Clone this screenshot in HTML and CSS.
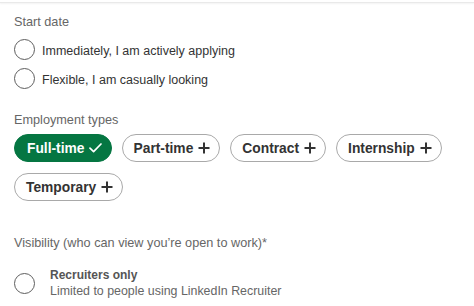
FILE: index.html
```html
<!DOCTYPE html>
<html lang="en">
<head>
    <meta charset="UTF-8">
    <meta name="viewport" content="width=device-width, initial-scale=1.0">
    <title>Open to work preferences</title>
    <link rel="stylesheet" href="styles.css">
</head>
<body>
    <!-- Header edge -->
    <div class="topbar"></div>

    <main class="form">
        <!-- Start date -->
        <section class="field field-start">
            <div class="field-label">Start date</div>
            <label class="radio">
                <span class="radio-circle"></span>
                <span class="radio-text">Immediately, I am actively applying</span>
            </label>
            <label class="radio">
                <span class="radio-circle"></span>
                <span class="radio-text">Flexible, I am casually looking</span>
            </label>
        </section>

        <!-- Employment types -->
        <section class="field field-types">
            <div class="field-label">Employment types</div>
            <div class="chips">
                <button class="chip chip-selected">Full-time
                    <svg class="chip-icon" width="13" height="10" viewBox="0 0 13 10"><path d="M1 5.2 L4.6 8.6 L12 1" fill="none" stroke="#fff" stroke-width="1.7" stroke-linecap="round" stroke-linejoin="round"/></svg>
                </button>
                <button class="chip">Part-time
                    <svg class="chip-icon" width="12" height="12" viewBox="0 0 12 12"><path d="M6 0.5 V11.5 M0.5 6 H11.5" stroke="#333" stroke-width="2"/></svg>
                </button>
                <button class="chip">Contract
                    <svg class="chip-icon" width="12" height="12" viewBox="0 0 12 12"><path d="M6 0.5 V11.5 M0.5 6 H11.5" stroke="#333" stroke-width="2"/></svg>
                </button>
                <button class="chip">Internship
                    <svg class="chip-icon" width="12" height="12" viewBox="0 0 12 12"><path d="M6 0.5 V11.5 M0.5 6 H11.5" stroke="#333" stroke-width="2"/></svg>
                </button>
                <button class="chip">Temporary
                    <svg class="chip-icon" width="12" height="12" viewBox="0 0 12 12"><path d="M6 0.5 V11.5 M0.5 6 H11.5" stroke="#333" stroke-width="2"/></svg>
                </button>
            </div>
        </section>

        <!-- Visibility -->
        <section class="field field-visibility">
            <div class="field-label">Visibility (who can view you’re open to work)*</div>
            <label class="radio radio-detail">
                <span class="radio-circle"></span>
                <span class="radio-body">
                    <span class="radio-title">Recruiters only</span>
                    <span class="radio-desc">Limited to people using LinkedIn Recruiter</span>
                </span>
            </label>
        </section>
    </main>
</body>
</html>
```

FILE: styles.css
```css
* {
    margin: 0;
    padding: 0;
    box-sizing: border-box;
}

body {
    font-family: 'Liberation Sans', Arial, Helvetica, sans-serif;
    background: #fff;
    color: #333;
    height: 306px;
    overflow: hidden;
}

.topbar {
    height: 3px;
    border-bottom: 1px solid #e9e9e9;
    box-shadow: 0 1px 2px rgba(0, 0, 0, 0.05);
}

.form {
    padding: 11px 14px 0;
}

.field-label {
    font-size: 12.7px;
    line-height: 16px;
    color: #666;
}

/* Radios */
.radio {
    display: flex;
    align-items: center;
    gap: 7px;
    height: 29px;
}

.field-start .field-label {
    margin-bottom: 5px;
}

.radio-circle {
    width: 21px;
    height: 21px;
    border: 1.5px solid #5e5e5e;
    border-radius: 50%;
    flex-shrink: 0;
}

.radio-text {
    font-size: 12.5px;
    line-height: 16px;
    color: #333;
    padding-top: 2px;
}

/* Chips */
.field-types {
    margin-top: 19px;
}

.chips {
    display: flex;
    flex-wrap: wrap;
    gap: 11px 10px;
    margin-top: 6px;
    width: 440px;
}

.chip {
    display: flex;
    align-items: center;
    gap: 5px;
    height: 28px;
    padding: 0 9px 0 11px;
    border: 1px solid #a9a9a9;
    border-radius: 14px;
    background: #fff;
    font-family: inherit;
    font-size: 13.8px;
    font-weight: 700;
    color: #333;
}

.chip-selected {
    background: #057642;
    border-color: #057642;
    color: #fff;
    padding: 0 9px 0 12px;
    gap: 4px;
}

.chip-icon {
    display: block;
}

/* Visibility */
.field-visibility {
    margin-top: 34px;
}

.radio-detail {
    height: auto;
    gap: 15px;
    margin-top: 16px;
}

.radio-body {
    display: flex;
    flex-direction: column;
}

.radio-title {
    font-size: 12px;
    line-height: 16px;
    font-weight: 700;
    color: #555;
}

.radio-desc {
    font-size: 12.4px;
    line-height: 16px;
    color: #666;
}
```
